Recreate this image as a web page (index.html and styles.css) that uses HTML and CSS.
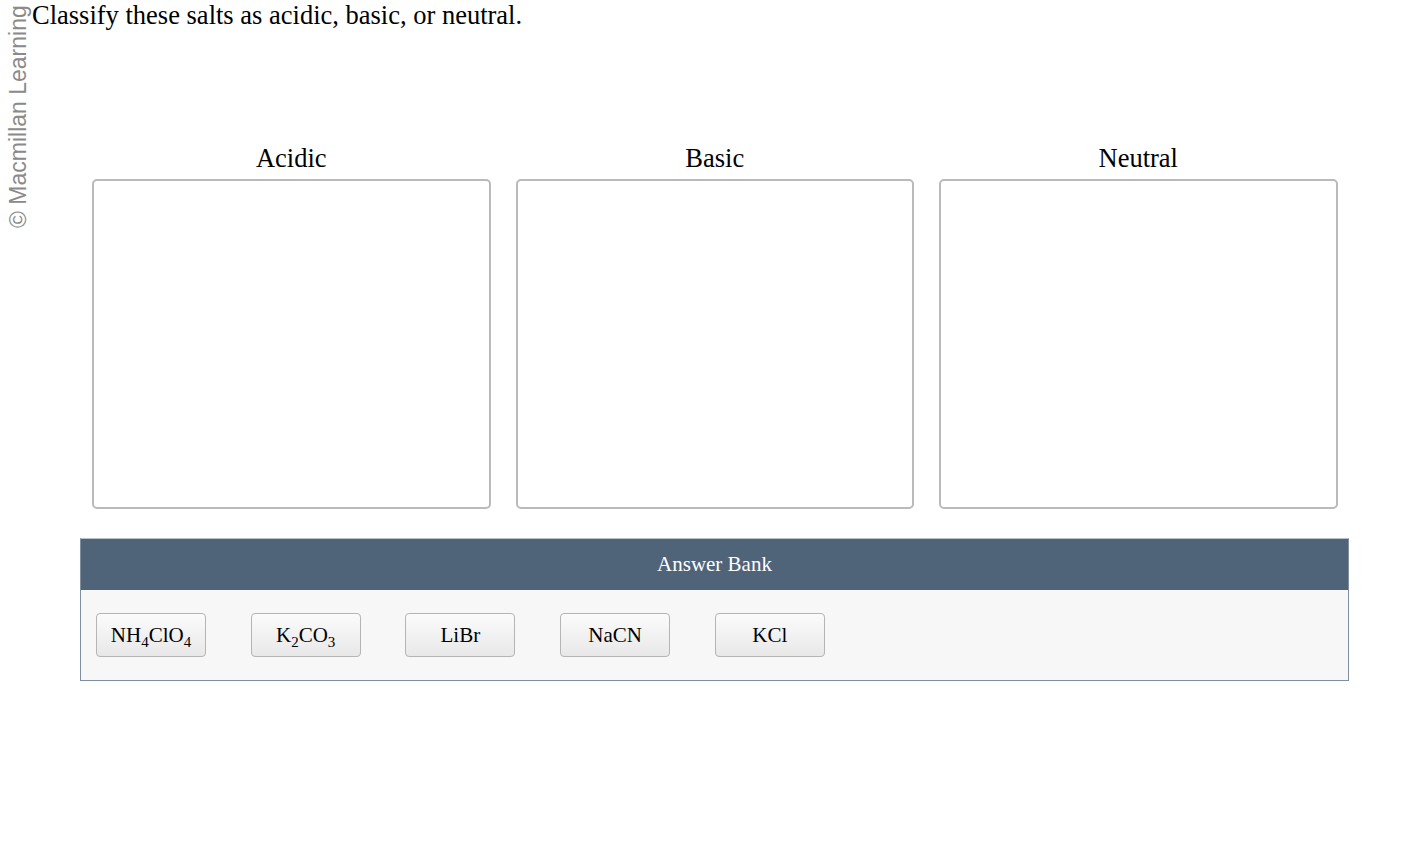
FILE: index.html
```html
<!DOCTYPE html>
<html>
<head>
<meta charset="utf-8">
<link rel="stylesheet" href="styles.css">
</head>
<body>
<div class="watermark">© Macmillan Learning</div>
<p class="question">Classify these salts as acidic, basic, or neutral.</p>
<div class="bins">
  <div class="bin">
    <div class="bin-title">Acidic</div>
    <div class="bin-box"></div>
  </div>
  <div class="bin">
    <div class="bin-title">Basic</div>
    <div class="bin-box"></div>
  </div>
  <div class="bin">
    <div class="bin-title">Neutral</div>
    <div class="bin-box"></div>
  </div>
</div>
<div class="bank">
  <div class="bank-header">Answer Bank</div>
  <div class="bank-body">
    <div class="chip">NH<sub>4</sub>ClO<sub>4</sub></div>
    <div class="chip">K<sub>2</sub>CO<sub>3</sub></div>
    <div class="chip">LiBr</div>
    <div class="chip">NaCN</div>
    <div class="chip">KCl</div>
  </div>
</div>
</body>
</html>
```
FILE: styles.css
```css
html, body {
  margin: 0;
  padding: 0;
  background: #fff;
}
body {
  font-family: "Liberation Serif", "Times New Roman", serif;
  color: #000;
  position: relative;
  width: 1406px;
  height: 852px;
  overflow: hidden;
}
.watermark {
  position: absolute;
  left: 7px;
  top: 228px;
  transform-origin: 0 0;
  transform: rotate(-90deg);
  font-family: "Liberation Sans", Arial, sans-serif;
  font-size: 23px;
  line-height: 23px;
  color: #8a8a8a;
  white-space: nowrap;
}
.question {
  margin: 0;
  padding-left: 32px;
  font-size: 26.5px;
  line-height: 30px;
}
.bins {
  display: flex;
  gap: 25px;
  margin-left: 92px;
  margin-top: 113px;
}
.bin {
  width: 398.5px;
  display: flex;
  flex-direction: column;
}
.bin-title {
  text-align: center;
  font-size: 26.5px;
  line-height: 30px;
  margin-bottom: 6px;
}
.bin-box {
  height: 326px;
  border: 2px solid #bababa;
  border-radius: 5px;
  background: #fff;
}
.bank {
  margin-left: 80px;
  margin-top: 29px;
  width: 1269px;
  border: 1px solid #7f8fa0;
  border-top-color: #b9c2cb;
  box-sizing: border-box;
}
.bank-header {
  height: 51px;
  background: #506479;
  color: #fff;
  text-align: center;
  font-size: 21px;
  line-height: 50px;
}
.bank-body {
  background: #f7f7f7;
  height: 90px;
  box-sizing: border-box;
  padding: 23px 15px 0 15px;
  display: flex;
  gap: 44.7px;
}
.chip {
  width: 110px;
  height: 44px;
  box-sizing: border-box;
  border: 1px solid #b5b5b5;
  border-radius: 4px;
  background: linear-gradient(#fbfbfb, #e8e8e8);
  font-size: 21px;
  line-height: 42px;
  text-align: center;
}
.chip sub {
  font-size: 15px;
  vertical-align: -5px;
  line-height: 0;
}
```
